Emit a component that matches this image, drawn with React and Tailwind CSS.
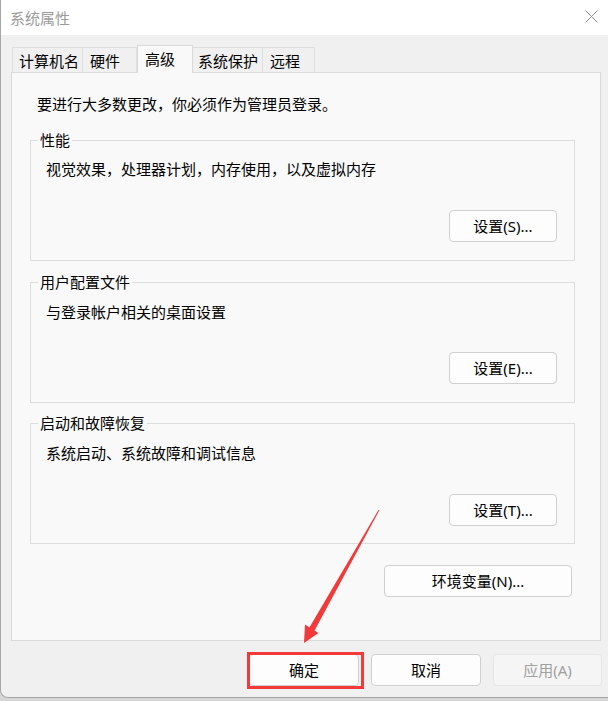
const font = { fontFamily: '"Noto Sans", "Noto Sans CJK SC", sans-serif' };

const tabs = [
  { label: "计算机名", w: "w-[71px]", pl: "pl-[6px]" },
  { label: "硬件", w: "w-[54px]", pl: "pl-[7px]" },
  { label: "高级", w: "w-[56px]", pl: "pl-[7px]", active: true },
  { label: "系统保护", w: "w-[70px]", pl: "pl-[5px]" },
  { label: "远程", w: "w-[52px]", pl: "pl-[7px]" },
];

function Button({ children, className = "", disabled = false }) {
  return (
    <button
      disabled={disabled}
      className={
        "h-[32px] rounded-[4px] border text-[15px] leading-[20px] " +
        (disabled
          ? "border-[#e6e6e6] bg-[#f5f5f5] text-[#a0a0a0] "
          : "border-[#d0d0d0] bg-[#fdfdfd] text-black ") +
        className
      }
    >
      {children}
    </button>
  );
}

function Group({ title, desc, button, descTop, btnTop, pb }) {
  return (
    <fieldset className={"ml-[18px] w-[545px] border border-[#dcdcdc] " + pb}>
      <legend className="ml-[7px] px-[2px] text-[15px] leading-[20px] text-black">
        {title}
      </legend>
      <div className={"pl-[15px] text-[15px] leading-[20px] text-black " + descTop}>
        {desc}
      </div>
      <div className={"flex justify-end pr-[17px] " + btnTop}>
        <Button className="w-[108px]">{button}</Button>
      </div>
    </fieldset>
  );
}

export default function App() {
  return (
    <div className="relative h-[701px] w-[608px] overflow-hidden bg-[#d6d6d6]" style={font}>
      <div className="flex h-[698px] flex-col overflow-hidden rounded-bl-[8px] border-b border-l border-[#a6a6a6] bg-[#f0f0f0]">
        {/* title bar */}
        <div className="flex h-[35px] items-center justify-between bg-white pl-[9px] pr-[10px]">
          <span className="text-[15px] leading-[20px] text-[#9b9b9b]">系统属性</span>
          <svg width="13" height="13" viewBox="0 0 13 13" className="mt-[-3px]">
            <path d="M0.5 0.5 L12.5 12.5 M12.5 0.5 L0.5 12.5" stroke="#8a8a8a" strokeWidth="1" fill="none" />
          </svg>
        </div>

        {/* tabs */}
        <div className="ml-[11px] flex h-[28px] items-start mt-[10px]">
          {tabs.map((t, i) =>
            t.active ? (
              <div
                key={t.label}
                className={`relative z-10 h-[28px] border-x border-t border-[#dadada] bg-[#f9f9f9] pt-[3px] text-[15px] leading-[20px] text-black ${t.w} ${t.pl}`}
              >
                {t.label}
              </div>
            ) : (
              <div
                key={t.label}
                className={`mt-[2px] h-[25px] border-t border-r border-[#dedede] bg-[#f0f0f0] pt-[3px] text-[15px] leading-[20px] text-black ${i === 0 ? "border-l" : ""} ${t.w} ${t.pl}`}
              >
                {t.label}
              </div>
            )
          )}
        </div>

        {/* panel */}
        <div className="ml-[10px] mt-[-1px] h-[569px] w-[590px] border border-[#dadada] bg-[#f9f9f9] pt-[21px]">
          <div className="pl-[25px] text-[15px] leading-[20px] text-black">
            要进行大多数更改，你必须作为管理员登录。
          </div>
          <div className="mt-[16px]">
            <Group
              title="性能"
              desc="视觉效果，处理器计划，内存使用，以及虚拟内存"
              button="设置(S)..."
              descTop="mt-[9px]"
              btnTop="mt-[31px]"
              pb="pb-[18px]"
            />
          </div>
          <div className="mt-[11px]">
            <Group
              title="用户配置文件"
              desc="与登录帐户相关的桌面设置"
              button="设置(E)..."
              descTop="mt-[10px]"
              btnTop="mt-[30px]"
              pb="pb-[18px]"
            />
          </div>
          <div className="mt-[10px]">
            <Group
              title="启动和故障恢复"
              desc="系统启动、系统故障和调试信息"
              button="设置(T)..."
              descTop="mt-[10px]"
              btnTop="mt-[31px]"
              pb="pb-[17px]"
            />
          </div>
          <div className="mt-[21px] flex justify-end pr-[28px]">
            <Button className="w-[188px]">环境变量(N)...</Button>
          </div>
        </div>

        {/* footer */}
        <div className="mt-[13px] flex justify-end gap-[12px] pr-[6px]">
          <Button className="w-[110px]">确定</Button>
          <Button className="w-[110px]">取消</Button>
          <Button className="w-[109px]" disabled>
            应用(A)
          </Button>
        </div>
      </div>

      {/* annotation */}
      <svg className="pointer-events-none absolute left-0 top-0" width="608" height="701">
        <rect x="248.5" y="653.5" width="114" height="34" fill="none" stroke="#f23a3a" strokeWidth="3" />
        <polygon
          points="379.4,510.2 314.6,630.5 318.5,633 304,643 305,624.5 309.4,627.5 378.6,509.8"
          fill="#f23a3a"
        />
      </svg>
    </div>
  );
}
